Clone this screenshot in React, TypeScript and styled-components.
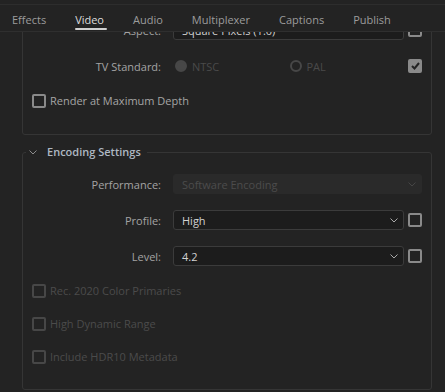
import { useLayoutEffect, useRef } from 'react'
import styled, { createGlobalStyle } from 'styled-components'

const GlobalStyle = createGlobalStyle`
	html, body {
		margin: 0;
		padding: 0;
		background: #232323;
	}
	body {
		font-family: 'Open Sans', 'Noto Sans', sans-serif;
		font-size: 11px;
		color: #a3a3a3;
	}
`

const TABS = ['Effects', 'Video', 'Audio', 'Multiplexer', 'Captions', 'Publish']

const Chevron = ({ color = '#a8a8a8' }: { color?: string }) => (
	<svg width="8" height="5" viewBox="0 0 8 5" fill="none" aria-hidden="true">
		<path d="M0.5 0.5L4 4L7.5 0.5" stroke={color} strokeWidth="1" />
	</svg>
)

export default function App() {
	const scrollRef = useRef<HTMLDivElement>(null)

	// the panel is scrolled a little so the Aspect row sits under the tabs
	useLayoutEffect(() => {
		if (scrollRef.current) scrollRef.current.scrollTop = 21
	}, [])

	return (
		<Window>
			<GlobalStyle />
			<TopStrip />
			<TabBar>
				{TABS.map((t) => (
					<Tab key={t} $active={t === 'Video'}>
						{t}
					</Tab>
				))}
			</TabBar>

			<ScrollArea ref={scrollRef}>
				<Panel>
					<Row $h={36}>
						<Label>Aspect:</Label>
						<Select>
							<span>Square Pixels (1.0)</span>
							<Chevron />
						</Select>
						<Checkbox />
					</Row>
					<Row $h={36}>
						<Label>TV Standard:</Label>
						<RadioGroup>
							<RadioOption>
								<Radio $checked />
								NTSC
							</RadioOption>
							<RadioOption>
								<Radio />
								PAL
							</RadioOption>
						</RadioGroup>
						<Checkbox $checked>
							<svg width="9" height="8" viewBox="0 0 9 8" fill="none">
								<path d="M1 4L3.5 6.5L8 1" stroke="#232323" strokeWidth="2" />
							</svg>
						</Checkbox>
					</Row>
					<Row $h={33}>
						<CheckItem>
							<Checkbox />
							Render at Maximum Depth
						</CheckItem>
					</Row>
				</Panel>

				<Section>
					<Legend>
						<Chevron color="#8c8c8c" />
						<span>Encoding Settings</span>
					</Legend>
					<Row $h={36}>
						<Label>Performance:</Label>
						<Select $disabled $full>
							<span>Software Encoding</span>
							<Chevron color="#454545" />
						</Select>
					</Row>
					<Row $h={36}>
						<Label>Profile:</Label>
						<Select>
							<span>High</span>
							<Chevron />
						</Select>
						<Checkbox />
					</Row>
					<Row $h={36}>
						<Label>Level:</Label>
						<Select>
							<span>4.2</span>
							<Chevron />
						</Select>
						<Checkbox />
					</Row>
					<Row $h={33}>
						<CheckItem $disabled>
							<Checkbox $disabled />
							Rec. 2020 Color Primaries
						</CheckItem>
					</Row>
					<Row $h={33}>
						<CheckItem $disabled>
							<Checkbox $disabled />
							High Dynamic Range
						</CheckItem>
					</Row>
					<Row $h={33}>
						<CheckItem $disabled>
							<Checkbox $disabled />
							Include HDR10 Metadata
						</CheckItem>
					</Row>
				</Section>
			</ScrollArea>
		</Window>
	)
}

const Window = styled.div`
	height: 392px;
	display: flex;
	flex-direction: column;
	overflow: hidden;
	background: #232323;
`

const TopStrip = styled.div`
	height: 4px;
	flex-shrink: 0;
	border-bottom: 1px solid #2d2d2d;
`

const TabBar = styled.nav`
	height: 26px;
	flex-shrink: 0;
	display: flex;
	gap: 29px;
	padding-left: 12px;
	border-bottom: 1px solid #2f2f2f;
`

const Tab = styled.div<{ $active?: boolean }>`
	position: relative;
	display: flex;
	align-items: center;
	padding-top: 2px;
	color: ${(p) => (p.$active ? '#dcdcdc' : '#9c9c9c')};

	&::after {
		content: '';
		display: ${(p) => (p.$active ? 'block' : 'none')};
		position: absolute;
		left: 0;
		right: -3px;
		bottom: 1px;
		height: 2px;
		border-radius: 1px;
		background: #d0d0d0;
	}
`

const ScrollArea = styled.div`
	flex: 1;
	overflow: hidden;
	padding: 0 13px 0 22px;
`

const Panel = styled.div`
	border: 1px solid #353535;
	border-radius: 3px;
	padding: 0 9px 17px;
`

const Section = styled.fieldset`
	margin: 9px 0 20px;
	border: 1px solid #353535;
	border-radius: 3px;
	padding: 6px 9px 16px;
	min-width: 0;
`

const Legend = styled.legend`
	display: flex;
	align-items: center;
	gap: 10px;
	margin-left: -6px;
	padding: 0 6px 0 3px;
	line-height: 16px;
	font-weight: 600;
	color: #aeb8c2;
`

const Row = styled.div<{ $h: number }>`
	height: ${(p) => p.$h}px;
	display: flex;
	align-items: center;
`

const Label = styled.div`
	width: 129px;
	flex-shrink: 0;
	margin-right: 12px;
	text-align: right;
	color: #a3a3a3;
	white-space: nowrap;
`

const Select = styled.div<{ $disabled?: boolean; $full?: boolean }>`
	flex: 1;
	height: 20px;
	box-sizing: border-box;
	display: flex;
	align-items: center;
	justify-content: space-between;
	padding: 0 5px 0 8px;
	margin-right: ${(p) => (p.$full ? '0' : '4px')};
	border: 1px solid ${(p) => (p.$disabled ? '#2a2a2a' : '#3b3b3b')};
	border-radius: 3px;
	background: ${(p) => (p.$disabled ? '#2a2a2a' : '#1c1c1c')};
	color: ${(p) => (p.$disabled ? '#4c4c4c' : '#d2d2d2')};
	white-space: nowrap;
`

const Checkbox = styled.div<{ $checked?: boolean; $disabled?: boolean }>`
	width: 14px;
	height: 14px;
	flex-shrink: 0;
	box-sizing: border-box;
	display: flex;
	align-items: center;
	justify-content: center;
	border: 2px solid ${(p) => (p.$disabled ? '#474747' : '#8a8a8a')};
	border-radius: 2px;
	background: ${(p) => (p.$checked ? '#8a8a8a' : 'transparent')};
`

const RadioGroup = styled.div`
	flex: 1;
	display: flex;
	margin-right: 4px;
	padding-left: 2px;
`

const RadioOption = styled.label`
	flex: 1;
	display: flex;
	align-items: center;
	gap: 5px;
	color: #4a4a4a;
`

const Radio = styled.span<{ $checked?: boolean }>`
	width: 12px;
	height: 12px;
	box-sizing: border-box;
	border-radius: 50%;
	border: 2px solid #474747;
	background: ${(p) => (p.$checked ? '#474747' : 'transparent')};
`

const CheckItem = styled.label<{ $disabled?: boolean }>`
	display: flex;
	align-items: center;
	gap: 4px;
	color: ${(p) => (p.$disabled ? '#4b4b4b' : '#a5a5a5')};
`
